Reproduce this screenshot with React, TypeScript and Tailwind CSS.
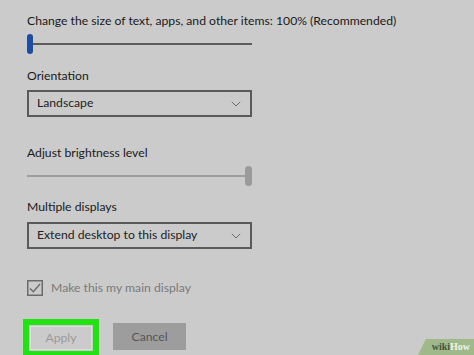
const font = { fontFamily: 'Lato, "Open Sans", sans-serif' }

const Chevron = () => (
  <svg width="10" height="6" viewBox="0 0 10 6" fill="none">
    <path d="M0.8 0.8 L5 5 L9.2 0.8" stroke="#6a6a6a" strokeWidth="1" />
  </svg>
)

const Dropdown = ({ value }: { value: string }) => (
  <div className="flex h-[27px] w-[225px] items-center justify-between border-2 border-[#5a5a5a] pl-[8px] pr-[9px] text-[12.2px] text-[#222]">
    <span>{value}</span>
    <Chevron />
  </div>
)

export default function App() {
  return (
    <div className="relative h-[355px] w-[474px] overflow-hidden bg-[#cbcbcb]" style={font}>
      <div className="flex flex-col pl-[27px] pt-[11px]">
        <div className="text-[12.2px] leading-[20px] text-[#1a1a1a]">
          Change the size of text, apps, and other items: 100% (Recommended)
        </div>

        {/* scale slider */}
        <div className="mt-[3px] flex h-[20px] w-[225px] items-center">
          <div className="h-[20px] w-[6px] rounded-full bg-[#1d4ea6]" />
          <div className="h-[2px] flex-1 bg-[#5c5c5c]" />
        </div>

        <div className="mt-[12px] text-[12.2px] leading-[20px] text-[#1a1a1a]">Orientation</div>
        <div className="mt-[4px]">
          <Dropdown value="Landscape" />
        </div>

        <div className="mt-[26px] text-[12.2px] leading-[20px] text-[#1a1a1a]">Adjust brightness level</div>
        {/* brightness slider */}
        <div className="mt-[3px] flex h-[20px] w-[225px] items-center">
          <div className="h-[2px] flex-1 bg-[#9c9c9c]" />
          <div className="h-[20px] w-[7px] rounded-full bg-[#9a9a9a]" />
        </div>

        <div className="mt-[11px] text-[12.2px] leading-[20px] text-[#1a1a1a]">Multiple displays</div>
        <div className="mt-[5px]">
          <Dropdown value="Extend desktop to this display" />
        </div>

        <div className="mt-[30px] flex items-center gap-[8px]">
          <svg width="16" height="16" viewBox="0 0 16 16" fill="none">
            <rect x="0.75" y="0.75" width="14.5" height="14.5" stroke="#6a6a6a" strokeWidth="1.5" />
            <path d="M3 8.5 L6.3 11.8 L13 4" stroke="#6a6a6a" strokeWidth="1.4" />
          </svg>
          <span className="text-[12.2px] text-[#7a7a7a]">Make this my main display</span>
        </div>

        <div className="mt-[22px] flex items-start">
          <div className="-ml-[4px] border-[6px] border-[#22e214] p-[1px]">
            <div className="flex h-[24px] w-[62px] items-center justify-center border border-[#dcdcdc] bg-[#cbcbcb] text-[12.2px] text-[#9a9a9a]">
              Apply
            </div>
          </div>
          <div className="ml-[14px] mt-[4px] flex h-[27px] w-[73px] items-center justify-center bg-[#9d9d9d] text-[12.2px] text-[#555]">
            Cancel
          </div>
        </div>
      </div>

      {/* wikiHow badge */}
      <div className="absolute bottom-0 right-0 flex h-[16px] w-[56px] items-center justify-end bg-[#9fb98a] pr-[4px] [clip-path:polygon(14%_0,100%_0,100%_100%,0_100%)]">
        <span className="text-[10px] font-bold leading-none" style={{ fontFamily: '"Liberation Serif", serif' }}>
          <span className="text-[#44533a]">wiki</span>
          <span className="text-[#eef3e8]">How</span>
        </span>
      </div>
    </div>
  )
}
